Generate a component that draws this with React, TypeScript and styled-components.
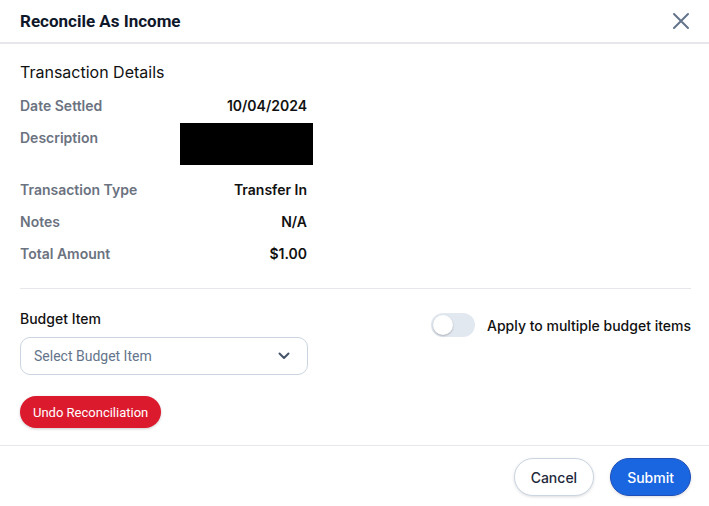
import React from 'react';
import styled, { createGlobalStyle } from "styled-components";

const Global = createGlobalStyle`
  body {
    margin: 0;
    background: #ffffff;
    font-family: Inter, "Noto Sans", sans-serif;
    color: #111827;
  }
`

type RowProps = {
    label: string
    value: string
}

const DetailRow = (props: RowProps) => {
    return (
        <Row>
            <Label>{props.label}</Label>
            <Value>{props.value}</Value>
        </Row>
    );
};

export default function App() {
    return (
        <Modal>
            <Global/>
            <Header>
                <Title>Reconcile As Income</Title>
                <CloseButton aria-label="close">
                    <svg width="18" height="18" viewBox="0 0 18 18" fill="none">
                        <path d="M2 2L16 16M16 2L2 16" stroke="#64748b" strokeWidth="2" strokeLinecap="round"/>
                    </svg>
                </CloseButton>
            </Header>
            <Body>
                <Details>
                    <SectionTitle>Transaction Details</SectionTitle>
                    <DetailRow label="Date Settled" value="10/04/2024"/>
                    <DescRow>
                        <Label>Description</Label>
                        <Redacted/>
                    </DescRow>
                    <DetailRow label="Transaction Type" value="Transfer In"/>
                    <DetailRow label="Notes" value="N/A"/>
                    <DetailRow label="Total Amount" value="$1.00"/>
                </Details>
                <Divider/>
                <BudgetSection>
                    <LeftCol>
                        <FieldLabel>Budget Item</FieldLabel>
                        <Select>
                            <Placeholder>Select Budget Item</Placeholder>
                            <svg width="12" height="8" viewBox="0 0 12 8" fill="none">
                                <path d="M1.5 1.5L6 6L10.5 1.5" stroke="#475569" strokeWidth="2" strokeLinecap="round" strokeLinejoin="round"/>
                            </svg>
                        </Select>
                        <DangerButton>Undo Reconciliation</DangerButton>
                    </LeftCol>
                    <ToggleRow>
                        <Toggle>
                            <Knob/>
                        </Toggle>
                        <ToggleLabel>Apply to multiple budget items</ToggleLabel>
                    </ToggleRow>
                </BudgetSection>
            </Body>
            <Footer>
                <Button>Cancel</Button>
                <Button primary>Submit</Button>
            </Footer>
        </Modal>
    );
}

const Modal = styled.div`
    width: 709px;
    height: 506px;
    background: #fff;
`
const Header = styled.div`
    height: 42px;
    display: flex;
    align-items: center;
    justify-content: space-between;
    padding: 0 20px;
    border-bottom: 2px solid #e5e7eb;
`
const Title = styled.h2`
    margin: 0;
    font-family: Roboto, sans-serif;
    font-size: 17px;
    font-weight: 700;
    color: #0f172a;
`
const CloseButton = styled.button`
    border: none;
    background: none;
    padding: 0;
    display: flex;
    margin-right: -1px;
`
const Body = styled.div`
    padding: 18px 18px 0 20px;
`
const Details = styled.div`
    width: 287px;
    display: flex;
    flex-direction: column;
`
const SectionTitle = styled.h3`
    margin: 0 0 8px;
    font-size: 16px;
    line-height: 20px;
    font-weight: 400;
    color: #111;
`
const Row = styled.div`
    height: 32px;
    display: flex;
    align-items: center;
    justify-content: space-between;
`
const DescRow = styled.div`
    height: 52px;
    display: flex;
    align-items: flex-start;
    justify-content: space-between;
    & > span {
        margin-top: 6px;
    }
`
const Label = styled.span`
    font-size: 14px;
    line-height: 20px;
    font-weight: 600;
    color: #6b7280;
`
const Value = styled.span`
    font-size: 14px;
    line-height: 20px;
    font-weight: 600;
    color: #111;
`
const Redacted = styled.div`
    width: 133px;
    height: 42px;
    margin: 1px -6px 0 0;
    background: #000;
`
const Divider = styled.hr`
    border: none;
    border-top: 1px solid #e5e7eb;
    margin: 18px 0 0;
`
const BudgetSection = styled.div`
    display: flex;
    justify-content: space-between;
    padding: 20px 0 17px;
`
const LeftCol = styled.div`
    display: flex;
    flex-direction: column;
    align-items: flex-start;
`
const FieldLabel = styled.label`
    font-size: 14px;
    line-height: 20px;
    font-weight: 500;
    color: #111;
    margin-bottom: 8px;
`
const Select = styled.div`
    box-sizing: border-box;
    width: 288px;
    height: 38px;
    border: 1px solid #cbd5e1;
    border-radius: 10px;
    display: flex;
    align-items: center;
    justify-content: space-between;
    padding: 0 17px 0 13px;
    margin-bottom: 21px;
`
const Placeholder = styled.span`
    font-family: Roboto, sans-serif;
    font-size: 14px;
    color: #64748b;
`
const DangerButton = styled.button`
    height: 32px;
    padding: 0 13px;
    border: none;
    border-radius: 16px;
    background: #dc1a2e;
    color: #fff;
    font-family: Roboto, sans-serif;
    font-size: 13px;
    box-shadow: 0 1px 3px rgba(0, 0, 0, 0.2);
`
const ToggleRow = styled.div`
    display: flex;
    align-items: center;
    gap: 12px;
    height: 24px;
    margin-top: 4px;
`
const Toggle = styled.div`
    width: 44px;
    height: 24px;
    border-radius: 12px;
    background: #e2e8f0;
    position: relative;
`
const Knob = styled.div`
    position: absolute;
    left: 2px;
    top: 2px;
    width: 20px;
    height: 20px;
    border-radius: 50%;
    background: #fff;
    box-shadow: 0 1px 2px rgba(0, 0, 0, 0.25);
`
const ToggleLabel = styled.span`
    font-size: 14px;
    font-weight: 500;
    color: #111;
`
const Footer = styled.div`
    border-top: 1px solid #e5e7eb;
    display: flex;
    justify-content: flex-end;
    gap: 16px;
    padding: 12px 18px 0 0;
`
const Button = styled.button<{ primary?: boolean }>`
    height: 38px;
    padding: 0 16px;
    border-radius: 19px;
    font-family: Inter, sans-serif;
    font-size: 14px;
    font-weight: 500;
    border: 1px solid ${p => p.primary ? '#1e4fb8' : '#cbd5e1'};
    background: ${p => p.primary ? '#1a66e0' : '#fff'};
    color: ${p => p.primary ? '#fff' : '#1e293b'};
    box-shadow: 0 1px 3px rgba(15, 23, 42, 0.15);
`
